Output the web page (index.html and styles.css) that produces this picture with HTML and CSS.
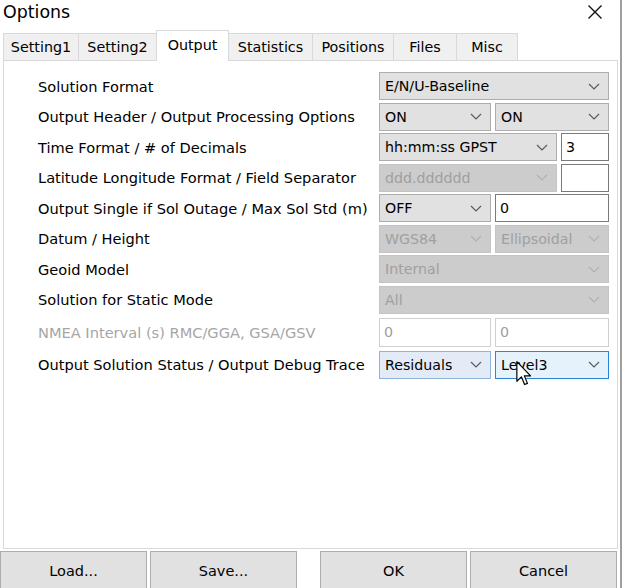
FILE: index.html
```html
<!DOCTYPE html>
<html>
<head>
<meta charset="utf-8">
<title>Options</title>
<link rel="stylesheet" href="styles.css">
</head>
<body>
<div class="window">
  <div class="titlebar">
    <span class="title">Options</span>
    <svg class="close" width="16" height="16" viewBox="0 0 16 16"><path d="M1.5 1.5 L14.5 14.5 M14.5 1.5 L1.5 14.5" stroke="#111" stroke-width="1.4" fill="none"/></svg>
  </div>
  <div class="tabs">
    <div class="tab t1">Setting1</div>
    <div class="tab t2">Setting2</div>
    <div class="tab t3 active">Output</div>
    <div class="tab t4">Statistics</div>
    <div class="tab t5">Positions</div>
    <div class="tab t6">Files</div>
    <div class="tab t7">Misc</div>
  </div>
  <div class="panel">
    <div class="row">
      <div class="label">Solution Format</div>
      <div class="ctl full">
        <div class="sel"><span>E/N/U-Baseline</span><svg class="chev" width="12" height="7" viewBox="0 0 12 7"><path d="M1 1 L6 6 L11 1"/></svg></div>
      </div>
    </div>
    <div class="row">
      <div class="label">Output Header / Output Processing Options</div>
      <div class="ctl half">
        <div class="sel"><span>ON</span><svg class="chev" width="12" height="7" viewBox="0 0 12 7"><path d="M1 1 L6 6 L11 1"/></svg></div>
        <div class="sel"><span>ON</span><svg class="chev" width="12" height="7" viewBox="0 0 12 7"><path d="M1 1 L6 6 L11 1"/></svg></div>
      </div>
    </div>
    <div class="row">
      <div class="label">Time Format / # of Decimals</div>
      <div class="ctl wide">
        <div class="sel"><span>hh:mm:ss GPST</span><svg class="chev" width="12" height="7" viewBox="0 0 12 7"><path d="M1 1 L6 6 L11 1"/></svg></div>
        <div class="inp">3</div>
      </div>
    </div>
    <div class="row">
      <div class="label">Latitude Longitude Format / Field Separator</div>
      <div class="ctl wide">
        <div class="sel dis"><span>ddd.dddddd</span><svg class="chev" width="12" height="7" viewBox="0 0 12 7"><path d="M1 1 L6 6 L11 1"/></svg></div>
        <div class="inp"></div>
      </div>
    </div>
    <div class="row">
      <div class="label">Output Single if Sol Outage / Max Sol Std (m)</div>
      <div class="ctl half">
        <div class="sel"><span>OFF</span><svg class="chev" width="12" height="7" viewBox="0 0 12 7"><path d="M1 1 L6 6 L11 1"/></svg></div>
        <div class="inp">0</div>
      </div>
    </div>
    <div class="row">
      <div class="label">Datum / Height</div>
      <div class="ctl half">
        <div class="sel dis"><span>WGS84</span><svg class="chev" width="12" height="7" viewBox="0 0 12 7"><path d="M1 1 L6 6 L11 1"/></svg></div>
        <div class="sel dis"><span>Ellipsoidal</span><svg class="chev" width="12" height="7" viewBox="0 0 12 7"><path d="M1 1 L6 6 L11 1"/></svg></div>
      </div>
    </div>
    <div class="row">
      <div class="label">Geoid Model</div>
      <div class="ctl full">
        <div class="sel dis"><span>Internal</span><svg class="chev" width="12" height="7" viewBox="0 0 12 7"><path d="M1 1 L6 6 L11 1"/></svg></div>
      </div>
    </div>
    <div class="row">
      <div class="label">Solution for Static Mode</div>
      <div class="ctl full">
        <div class="sel dis"><span>All</span><svg class="chev" width="12" height="7" viewBox="0 0 12 7"><path d="M1 1 L6 6 L11 1"/></svg></div>
      </div>
    </div>
    <div class="row nmea">
      <div class="label off">NMEA Interval (s) RMC/GGA, GSA/GSV</div>
      <div class="ctl half">
        <div class="inp dis">0</div>
        <div class="inp dis">0</div>
      </div>
    </div>
    <div class="row last">
      <div class="label">Output Solution Status / Output Debug Trace</div>
      <div class="ctl half">
        <div class="sel hover"><span>Residuals</span><svg class="chev" width="12" height="7" viewBox="0 0 12 7"><path d="M1 1 L6 6 L11 1"/></svg></div>
        <div class="sel focus"><span>Level3</span><svg class="chev" width="12" height="7" viewBox="0 0 12 7"><path d="M1 1 L6 6 L11 1"/></svg></div>
      </div>
    </div>
  </div>
  <div class="buttons">
    <div class="btn">Load...</div>
    <div class="btn">Save...</div>
    <div class="spacer"></div>
    <div class="btn">OK</div>
    <div class="btn">Cancel</div>
  </div>
  <svg class="cursor" width="16" height="25" viewBox="0 0 13 21"><path d="M0.5 0.5 L0.5 17 L4.3 13.3 L7 19.8 L9.4 18.8 L6.8 12.5 L12 12.5 Z" fill="#fff" stroke="#000" stroke-width="1" stroke-linejoin="round"/></svg>
</div>
</body>
</html>
```
FILE: styles.css
```css
html, body {
  margin: 0;
  padding: 0;
  background: #ffffff;
}
body {
  width: 625px;
  height: 588px;
  overflow: hidden;
  font-family: "DejaVu Sans", "Liberation Sans", sans-serif;
  color: #000;
}
.window {
  position: relative;
  width: 620px;
  height: 588px;
  border-right: 2px solid #a0a0a0;
  background: #fff;
}
.titlebar {
  height: 30px;
  display: flex;
  align-items: center;
  justify-content: space-between;
  padding: 0 17px 0 3px;
}
.title {
  font-size: 17.4px;
  margin-top: -6px;
}
.close {
  margin-top: -6px;
}
.tabs {
  position: relative;
  z-index: 1;
  display: flex;
  align-items: flex-end;
  height: 30px;
  margin-left: 3px;
}
.tab {
  box-sizing: border-box;
  height: 27px;
  background: #f0f0f0;
  border: 1px solid #d9d9d9;
  border-right: none;
  border-bottom: none;
  font-size: 14.3px;
  display: flex;
  align-items: center;
  justify-content: center;
}
.tab.t7 { border-right: 1px solid #d9d9d9; }
.tab.active {
  height: 31px;
  margin-bottom: -1px;
  background: #fff;
  border-right: 1px solid #d9d9d9;
  padding-bottom: 3px;
}
.tab.active + .tab { border-left: none; }
.t1 { width: 75px; }
.t2 { width: 78px; }
.t3 { width: 73px; }
.t4 { width: 83px; }
.t5 { width: 81px; }
.t6 { width: 63px; }
.t7 { width: 62px; }
.panel {
  box-sizing: border-box;
  margin-left: 3px;
  width: 615px;
  height: 489px;
  border: 1px solid #d9d9d9;
  padding: 11px 0 0 34px;
}
.row {
  display: grid;
  grid-template-columns: 341px 230px;
  align-items: center;
  height: 28px;
  margin-bottom: 2.5px;
}
.row.nmea { margin-top: 4px; height: 29px; }
.row.last { margin-top: 4px; }
.label {
  font-size: 14.6px;
  white-space: nowrap;
}
.label.off { color: #a6a6a6; }
.ctl {
  display: grid;
  gap: 4px;
  height: 100%;
}
.ctl.full { grid-template-columns: 230px; }
.ctl.half { grid-template-columns: 112px 114px; }
.ctl.wide { grid-template-columns: 178px 48px; }
.sel, .inp {
  box-sizing: border-box;
  height: 100%;
  font-size: 14.2px;
  display: flex;
  align-items: center;
  padding-left: 5px;
  white-space: nowrap;
  overflow: hidden;
}
.sel {
  justify-content: space-between;
  background: #e1e1e1;
  border: 1px solid #adadad;
}
.chev {
  flex: none;
  margin-right: 8px;
  fill: none;
  stroke: #5a5a5a;
  stroke-width: 1.2;
}
.sel.dis {
  background: #cccccc;
  border-color: #c4c4c4;
  color: #a0a0a0;
}
.sel.dis .chev { stroke: #b0b0b0; }
.sel.hover {
  background: #e3ecf6;
  border-color: #8cb4dc;
}
.sel.focus {
  background: #e5f1fb;
  border-color: #2a84d8;
}
.inp {
  background: #fff;
  border: 1px solid #7a7a7a;
  padding-left: 4px;
}
.inp.dis {
  border-color: #cfcfcf;
  color: #a0a0a0;
}
.buttons {
  display: flex;
  gap: 3px;
  margin-top: 2px;
}
.spacer { width: 17px; }
.btn {
  box-sizing: border-box;
  width: 147px;
  height: 40px;
  background: #e1e1e1;
  border: 1px solid #adadad;
  font-size: 14.5px;
  display: flex;
  justify-content: center;
  padding-top: 11px;
}
.cursor {
  position: absolute;
  left: 516px;
  top: 361px;
}
```
